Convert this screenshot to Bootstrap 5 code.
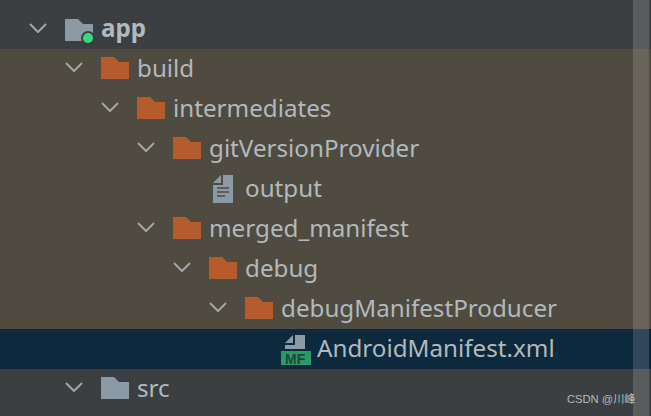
<!DOCTYPE html>
<html lang="zh">
<head>
  <meta charset="UTF-8">
  <title>Project tree</title>
  <link href="https://cdn.jsdelivr.net/npm/bootstrap@5.3.0/dist/css/bootstrap.min.css" rel="stylesheet">
  <style>
    html, body { height: 100%; }
    body {
      background: #3c3f41;
      color: #b2b9be;
      font-family: "Noto Sans", "Open Sans", sans-serif;
      overflow: hidden;
    }
    .tree-view { padding-top: 9px; height: 416px; position: relative; }
    .tree-row { height: 40px; font-size: 24.2px; line-height: 40px; white-space: nowrap; }
    .tree-row span { margin-top: -2px; }
    .tree-row.excluded { background: #4f4b41; }
    .tree-row.selected { background: #0d293e; }
    .lvl-0 { padding-left: 29px; }
    .lvl-1 { padding-left: 65px; }
    .lvl-2 { padding-left: 101px; }
    .lvl-3 { padding-left: 137px; }
    .lvl-4 { padding-left: 173px; }
    .lvl-5 { padding-left: 209px; }
    .lvl-6 { padding-left: 245px; }
    .arrow { width: 36px; flex: none; margin-top: -4px; }
    .arrow svg { display: block; }
    .no-arrow { width: 36px; flex: none; }
    .icon-slot { width: 28px; height: 28px; flex: none; margin-right: 8px; margin-top: -2px; display: flex; align-items: center; justify-content: center; }
    .icon-slot svg { display: block; flex: none; overflow: visible; }
    .icon-slot.doc-slot { margin-top: 0; }
    .icon-slot.mf-slot { margin-top: 2px; justify-content: flex-start; }
    .app-row .arrow { margin-top: -2px; }
    .app-row .icon-slot { margin-top: 2px; }
    .app-label { font-weight: 700; }
    .scroll-thumb { position: absolute; top: 0; right: 2px; bottom: 0; width: 16px; background: rgba(255, 255, 255, .15); }
    .watermark { position: absolute; left: 567px; top: 391px; font-size: 11.2px; line-height: 17px; color: #b9b9b9; font-family: "Liberation Sans", "Noto Sans CJK SC", sans-serif; }
  </style>
</head>
<body>
  <svg width="0" height="0" class="position-absolute">
    <symbol id="chev" viewBox="0 0 18 10"><path d="M1 1L9 9L17 1" fill="none" stroke="#a3a5a6" stroke-width="2"/></symbol>
    <symbol id="folder" viewBox="0 0 28 22"><path d="M0 0H13L18 5H28V22H0Z"/></symbol>
  </svg>

  <div class="tree-view">
    <div class="tree-row d-flex align-items-center lvl-0 app-row">
      <div class="arrow"><svg width="18" height="10"><use href="#chev"/></svg></div>
      <div class="icon-slot">
        <svg width="28" height="22" viewBox="0 0 28 22">
          <path d="M0 0H13L18 5H28V22H0Z" fill="#8b9aa4"/>
          <circle cx="23" cy="19" r="7" fill="#3c3f41"/>
          <circle cx="23" cy="19" r="5" fill="#35d982"/>
        </svg>
      </div>
      <span class="app-label">app</span>
    </div>
    <div class="tree-row excluded d-flex align-items-center lvl-1">
      <div class="arrow"><svg width="18" height="10"><use href="#chev"/></svg></div>
      <div class="icon-slot"><svg width="28" height="22" fill="#b55b2c"><use href="#folder"/></svg></div>
      <span>build</span>
    </div>
    <div class="tree-row excluded d-flex align-items-center lvl-2">
      <div class="arrow"><svg width="18" height="10"><use href="#chev"/></svg></div>
      <div class="icon-slot"><svg width="28" height="22" fill="#b55b2c"><use href="#folder"/></svg></div>
      <span>intermediates</span>
    </div>
    <div class="tree-row excluded d-flex align-items-center lvl-3">
      <div class="arrow"><svg width="18" height="10"><use href="#chev"/></svg></div>
      <div class="icon-slot"><svg width="28" height="22" fill="#b55b2c"><use href="#folder"/></svg></div>
      <span>gitVersionProvider</span>
    </div>
    <div class="tree-row excluded d-flex align-items-center lvl-4">
      <div class="no-arrow"></div>
      <div class="icon-slot doc-slot">
        <svg width="20" height="28" viewBox="0 0 20 28">
          <path d="M10 0H20V28H0V10H10Z" fill="#8b9aa4"/>
          <path d="M8 0V8H0Z" fill="#8b9aa4"/>
          <path d="M4 13H16M4 17H16M4 21H12" stroke="#4f4b41" stroke-width="1.6"/>
        </svg>
      </div>
      <span>output</span>
    </div>
    <div class="tree-row excluded d-flex align-items-center lvl-3">
      <div class="arrow"><svg width="18" height="10"><use href="#chev"/></svg></div>
      <div class="icon-slot"><svg width="28" height="22" fill="#b55b2c"><use href="#folder"/></svg></div>
      <span>merged_manifest</span>
    </div>
    <div class="tree-row excluded d-flex align-items-center lvl-4">
      <div class="arrow"><svg width="18" height="10"><use href="#chev"/></svg></div>
      <div class="icon-slot"><svg width="28" height="22" fill="#b55b2c"><use href="#folder"/></svg></div>
      <span>debug</span>
    </div>
    <div class="tree-row excluded d-flex align-items-center lvl-5">
      <div class="arrow"><svg width="18" height="10"><use href="#chev"/></svg></div>
      <div class="icon-slot"><svg width="28" height="22" fill="#b55b2c"><use href="#folder"/></svg></div>
      <span>debugManifestProducer</span>
    </div>
    <div class="tree-row selected d-flex align-items-center lvl-6">
      <div class="no-arrow"></div>
      <div class="icon-slot mf-slot">
        <svg width="30" height="30" viewBox="0 0 30 30">
          <path d="M14 0H24V14H4V10H14Z" fill="#8b9aa4"/>
          <path d="M12 0V8H4Z" fill="#8b9aa4"/>
          <rect x="0" y="16" width="30" height="14" fill="#2a9a68"/>
          <text x="4" y="28.5" font-size="14" font-weight="700" fill="#1d4a3a" font-family="Liberation Sans, sans-serif">MF</text>
        </svg>
      </div>
      <span>AndroidManifest.xml</span>
    </div>
    <div class="tree-row d-flex align-items-center lvl-1">
      <div class="arrow"><svg width="18" height="10"><use href="#chev"/></svg></div>
      <div class="icon-slot"><svg width="28" height="22" fill="#8b9aa4"><use href="#folder"/></svg></div>
      <span>src</span>
    </div>
    <div class="scroll-thumb"></div>
    <div class="watermark">CSDN @川峰</div>
  </div>
  <script src="https://cdn.jsdelivr.net/npm/bootstrap@5.3.0/dist/js/bootstrap.bundle.min.js"></script>
</body>
</html>
